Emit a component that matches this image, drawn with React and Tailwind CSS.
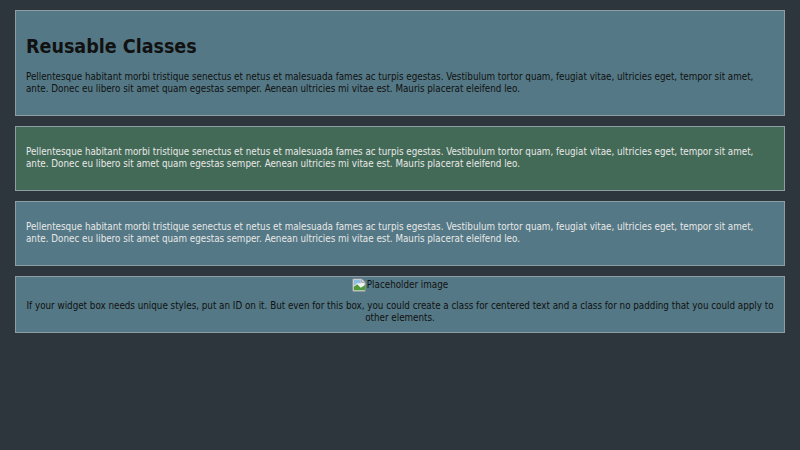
const lorem =
  "Pellentesque habitant morbi tristique senectus et netus et malesuada fames ac turpis egestas. Vestibulum tortor quam, feugiat vitae, ultricies eget, tempor sit amet, ante. Donec eu libero sit amet quam egestas semper. Aenean ultricies mi vitae est. Mauris placerat eleifend leo.";

function BrokenImage() {
  return (
    <svg width="14" height="14" viewBox="0 0 16 16" className="inline-block">
      <path d="M1 1h10l4 4v10H1z" fill="#f2f2f2" stroke="#9a9a9a" strokeWidth="1" />
      <path d="M2 10l4-3 4 4 5-3v6H2z" fill="#4f9a3a" />
      <path d="M2 2h8v4l-4 0-4 3z" fill="#8fbde0" />
      <path d="M11 1v4h4" fill="#dcdcdc" stroke="#9a9a9a" strokeWidth="1" />
    </svg>
  );
}

export default function App() {
  const box = "border border-[#8c9ea3] mb-[10px]";
  return (
    <div
      className="min-h-[450px] bg-[#2c363c] px-[15px] pt-[10px] pb-[10px] text-[9.75px] leading-[12px]"
      style={{ fontFamily: '"DejaVu Sans Condensed", "DejaVu Sans", sans-serif' }}
    >
      {/* widget 1 */}
      <div className={`${box} bg-[#547885] pl-[10px] pr-[18px] py-[10px] text-[#111]`}>
        <h2 className="mt-[14px] text-[19.5px] leading-[23px] font-bold">
          Reusable Classes
        </h2>
        <p className="mt-[13px] mb-[10px]">{lorem}</p>
      </div>

      {/* widget 2 */}
      <div className={`${box} bg-[#436a57] pl-[10px] pr-[18px] py-[10px] text-[#e8e8e8]`}>
        <p className="mt-[9px] mb-[10px]">{lorem}</p>
      </div>

      {/* widget 3 */}
      <div className={`${box} bg-[#547885] pl-[10px] pr-[18px] py-[10px] text-[#e8e8e8]`}>
        <p className="mt-[9px] mb-[10px]">{lorem}</p>
      </div>

      {/* widget 4 - centered, no padding */}
      <div className={`${box} bg-[#547885] text-center text-[#111]`}>
        <div className="flex h-[14px] items-center justify-center gap-[1px] pt-[1px]">
          <BrokenImage />
          <span>Placeholder image</span>
        </div>
        <p className="mt-[9px] mb-[8px] px-[4px]">
          If your widget box needs unique styles, put an ID on it. But even for
          this box, you could create a class for centered text and a class for
          no padding that you could apply to other elements.
        </p>
      </div>
    </div>
  );
}
